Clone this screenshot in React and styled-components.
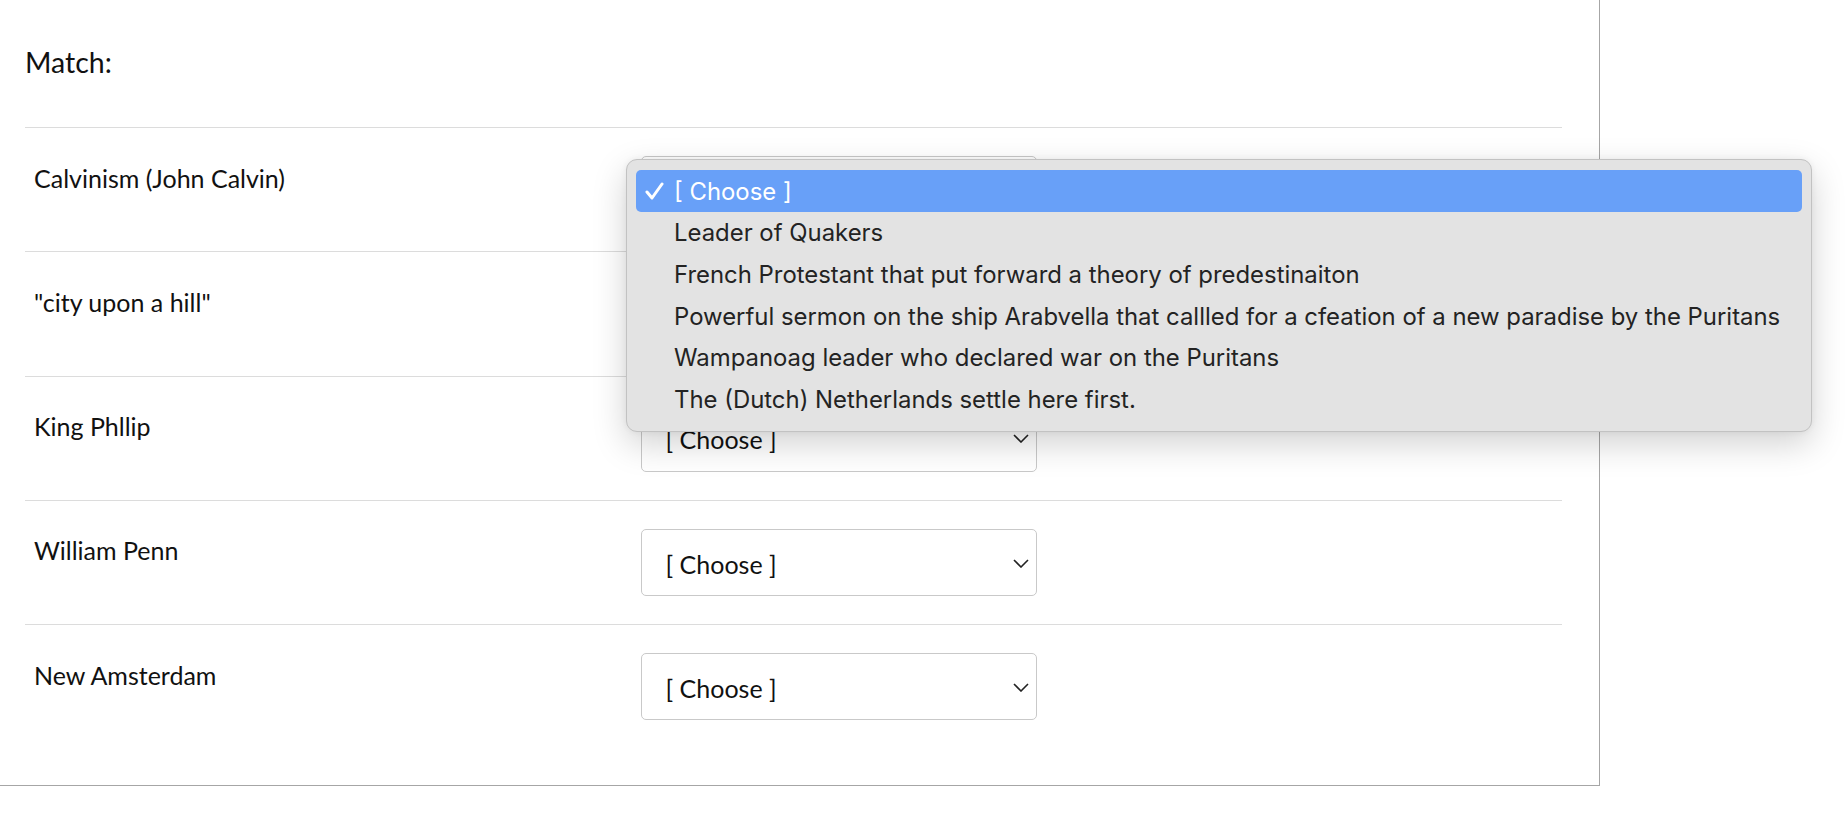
import React from 'react';
import styled, { createGlobalStyle } from 'styled-components';

const GlobalStyle = createGlobalStyle`
  html, body {
    margin: 0;
    background: #ffffff;
  }
  body {
    font-family: Lato, 'Liberation Sans', sans-serif;
    color: #111111;
  }
`;

const Page = styled.div`
  position: relative;
  width: 1600px;
`;

const QuizCard = styled.div`
  box-sizing: border-box;
  width: 1600px;
  padding: 47px 37px 37px 25px;
  border-right: 1px solid #a6a6a6;
  border-bottom: 1px solid #a6a6a6;
`;

const Title = styled.h2`
  margin: 0 0 50px;
  font-size: 28.5px;
  font-weight: 400;
  line-height: 30px;
`;

const Row = styled.div`
  box-sizing: border-box;
  display: grid;
  grid-template-columns: 616px 1fr;
  height: 124.25px;
  border-top: 1px solid #dcdcdc;
`;

const Label = styled.div`
  padding: 34.7px 0 0 9px;
  font-size: 25px;
  line-height: 1.2;
`;

const SelectWrap = styled.div`
  position: relative;
  width: 396px;
  height: 67px;
  margin-top: 28.3px;
`;

const Select = styled.select`
  appearance: none;
  box-sizing: border-box;
  width: 100%;
  height: 100%;
  padding: 2px 0 0 23.5px;
  border: 1px solid #c9c9c9;
  border-radius: 5px;
  background: #ffffff;
  font-family: Lato, 'Liberation Sans', sans-serif;
  font-size: 25px;
  color: #111111;
  outline: none;
`;

const Chevron = styled.svg`
  position: absolute;
  right: 8px;
  top: 29.5px;
  pointer-events: none;
`;

const Menu = styled.div`
  position: absolute;
  left: 626px;
  top: 159px;
  box-sizing: border-box;
  width: 1186px;
  height: 273px;
  padding: 10px 9px;
  background: #e3e3e3;
  border: 1px solid #c2c2c2;
  border-radius: 11px;
  box-shadow: 0 12px 34px rgba(0, 0, 0, 0.18), 0 0 6px rgba(0, 0, 0, 0.06);
  font-family: Inter, 'Noto Sans', sans-serif;
`;

const Option = styled.div`
  display: flex;
  align-items: center;
  height: ${(p) => (p.$first ? '42px' : '41.7px')};
  padding-left: 9px;
  border-radius: 5px;
  background: ${(p) => (p.$selected ? '#68a0f8' : 'transparent')};
  color: ${(p) => (p.$selected ? '#ffffff' : '#232323')};
  font-size: 23.9px;
  white-space: nowrap;
`;

const CheckSlot = styled.span`
  display: inline-flex;
  width: 29px;
  flex-shrink: 0;
`;

const items = [
  { label: 'Calvinism (John Calvin)' },
  { label: '"city upon a hill"' },
  { label: 'King Phllip' },
  { label: 'William Penn' },
  { label: 'New Amsterdam' },
];

const choices = [
  '[ Choose ]',
  'Leader of Quakers',
  'French Protestant that put forward a theory of predestinaiton',
  'Powerful sermon on the ship Arabvella that callled for a cfeation of a new paradise by the Puritans',
  'Wampanoag leader who declared war on the Puritans',
  'The (Dutch) Netherlands settle here first.',
];

const ChevronIcon = () => (
  <Chevron width="16" height="9" viewBox="0 0 16 9">
    <path d="M1 1 L8 8 L15 1" fill="none" stroke="#222" strokeWidth="1.6" />
  </Chevron>
);

const Check = () => (
  <svg width="19" height="18" viewBox="0 0 19 18">
    <path
      d="M2 10 L7 16 L17 2"
      fill="none"
      stroke="#ffffff"
      strokeWidth="3"
      strokeLinecap="round"
      strokeLinejoin="round"
    />
  </svg>
);

const MatchRow = ({ label }) => (
  <Row>
    <Label>{label}</Label>
    <SelectWrap>
      <Select defaultValue="">
        <option value="">[ Choose ]</option>
        {choices.slice(1).map((c) => (
          <option key={c} value={c}>
            {c}
          </option>
        ))}
      </Select>
      <ChevronIcon />
    </SelectWrap>
  </Row>
);

const App = () => (
  <Page>
    <GlobalStyle />
    <QuizCard>
      <Title>Match:</Title>
      {items.map((item) => (
        <MatchRow key={item.label} label={item.label} />
      ))}
    </QuizCard>
    <Menu>
      {choices.map((c, i) => (
        <Option key={c} $selected={i === 0} $first={i === 0}>
          <CheckSlot>{i === 0 && <Check />}</CheckSlot>
          {c}
        </Option>
      ))}
    </Menu>
  </Page>
);

export default App;
